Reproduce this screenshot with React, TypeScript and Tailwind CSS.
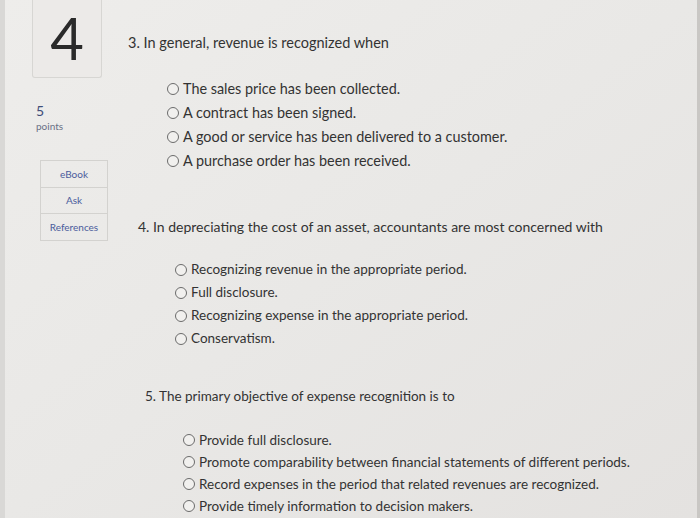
import React from "react";

const font = { fontFamily: "Lato, 'Open Sans', 'Liberation Sans', sans-serif" };

function Radio() {
  return <span className="inline-block w-[12px] h-[12px] rounded-full border-[1.5px] border-[#6b6b6b] bg-[#f1f0ee] shrink-0" />;
}

function Options({ items, rowH, gap, textCls }: { items: string[]; rowH: string; gap: string; textCls: string }) {
  return (
    <div className="flex flex-col">
      {items.map((t) => (
        <div key={t} className={`flex items-center ${rowH} ${gap}`}>
          <Radio />
          <span className={textCls}>{t}</span>
        </div>
      ))}
    </div>
  );
}

export default function App() {
  return (
    <div
      style={font}
      className="w-[700px] h-[518px] overflow-hidden flex bg-gradient-to-br from-[#eeedeb] via-[#e9e8e6] to-[#e4e2e0] text-[#333333] relative border-r-[3px] border-r-[#c9c7c4] border-l-[5px] border-l-[#d9d8d6]"
    >
      {/* left column */}
      <div className="w-[120px] shrink-0 flex flex-col">
        <div className="ml-[27px] w-[70px] h-[78px] border border-t-0 border-[#d7d6d3] rounded-b-[3px] flex items-center justify-center bg-[#eceae8]">
          <span className="text-[58px] leading-none font-normal text-[#2a2a2a] -mt-[2px]">4</span>
        </div>
        <div className="ml-[31px] mt-[25px] text-[14px] leading-[16px] text-[#3f4d78]">5</div>
        <div className="ml-[31px] text-[10px] leading-[14px] text-[#6a7186]">points</div>
        <div className="ml-[35px] mt-[27px] w-[68px] flex flex-col text-[10px] text-[#4a5c9c]">
          <div className="h-[28px] border border-[#d3d2cf] flex items-center justify-center">eBook</div>
          <div className="h-[26px] border border-t-0 border-[#d3d2cf] flex items-center justify-center">Ask</div>
          <div className="h-[27px] border border-t-0 border-[#d3d2cf] flex items-center justify-center">References</div>
        </div>
      </div>

      {/* right column */}
      <div className="flex flex-col pt-[33px]">
        <div className="ml-[3px] text-[14.5px] leading-[20px]">3. In general, revenue is recognized when</div>
        <div className="ml-[42px] mt-[24px]">
          <Options
            rowH="h-[24px]"
            gap="gap-[4px]"
            textCls="text-[14.4px]"
            items={[
              "The sales price has been collected.",
              "A contract has been signed.",
              "A good or service has been delivered to a customer.",
              "A purchase order has been received.",
            ]}
          />
        </div>

        <div className="ml-[13px] mt-[44px] text-[14px] leading-[20px]">4. In depreciating the cost of an asset, accountants are most concerned with</div>
        <div className="ml-[50px] mt-[21px]">
          <Options
            rowH="h-[23px]"
            gap="gap-[4px]"
            textCls="text-[13.5px]"
            items={[
              "Recognizing revenue in the appropriate period.",
              "Full disclosure.",
              "Recognizing expense in the appropriate period.",
              "Conservatism.",
            ]}
          />
        </div>

        <div className="ml-[20px] mt-[36px] text-[13.5px] leading-[20px]">5. The primary objective of expense recognition is to</div>
        <div className="ml-[58px] mt-[23px]">
          <Options
            rowH="h-[22px]"
            gap="gap-[4px]"
            textCls="text-[13.5px]"
            items={[
              "Provide full disclosure.",
              "Promote comparability between financial statements of different periods.",
              "Record expenses in the period that related revenues are recognized.",
              "Provide timely information to decision makers.",
            ]}
          />
        </div>
      </div>
    </div>
  );
}
